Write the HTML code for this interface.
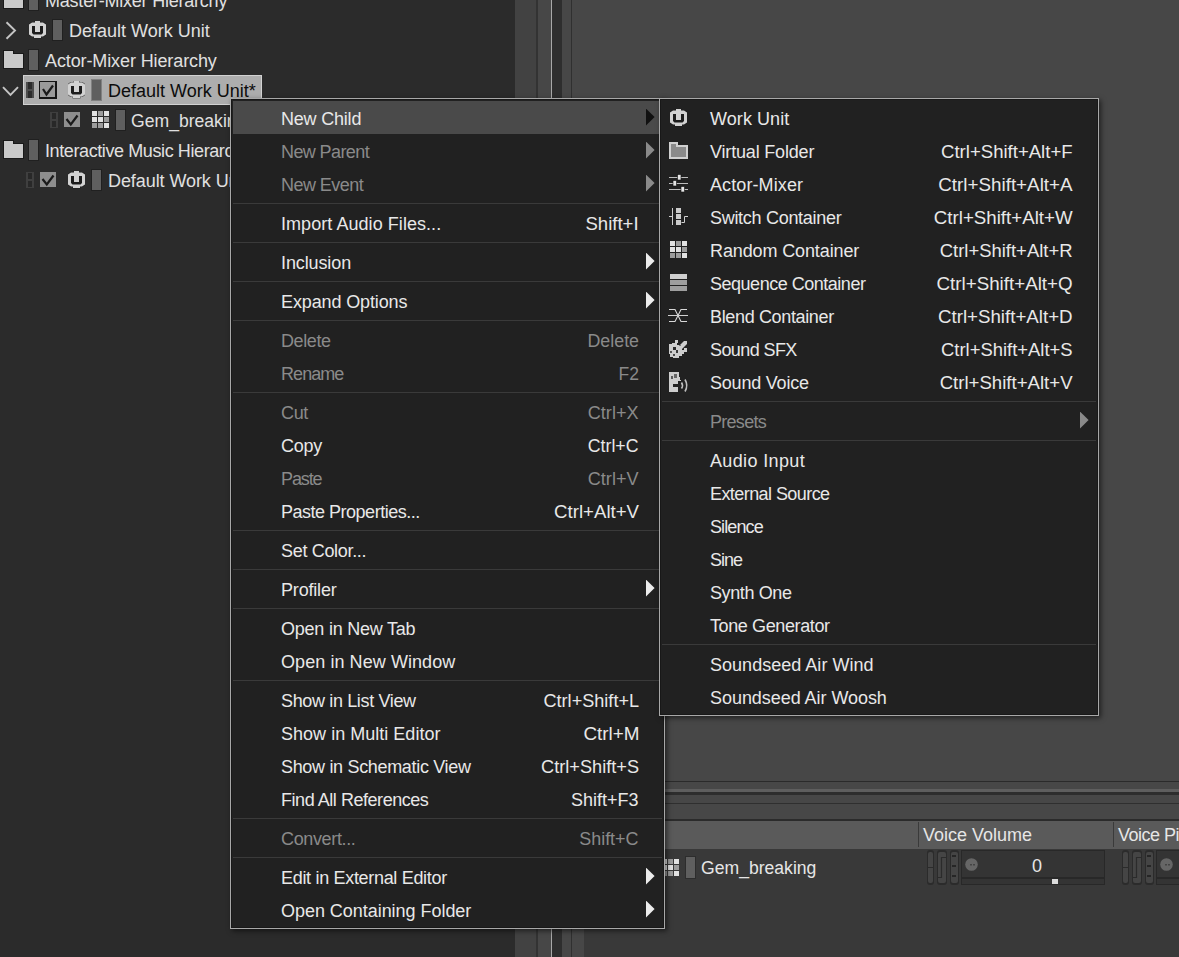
<!DOCTYPE html>
<html><head><meta charset="utf-8">
<style>
*{margin:0;padding:0;box-sizing:border-box}
html,body{width:1179px;height:957px;overflow:hidden;background:#2b2b2b;font-family:"Liberation Sans",sans-serif;}
.a{position:absolute}
.t{position:absolute;white-space:nowrap;font-size:18px;line-height:20px;color:#dcdcdc}
/* menus */
.menu{position:absolute;background:#212121;border:1px solid #a8a8a8;box-shadow:2px 2px 5px rgba(0,0,0,.55)}
.menu .in{position:absolute;left:0;top:0;right:0;bottom:0;border:1px solid #181818}
.it{position:absolute;left:2px;height:33px;width:429px}
.it .l{position:absolute;left:48px;top:2px;line-height:33px;font-size:18px;color:#e8e8e8;white-space:nowrap}
.it .r{position:absolute;right:23px;top:2px;line-height:33px;font-size:18px;color:#e8e8e8;white-space:nowrap}
.it.d .l,.it.d .r{color:#8a8a8a}
.it.hl{background:#4a4a4a}
.sep{position:absolute;left:2px;height:1px;background:#3a3a3a}
.arr{position:absolute;width:0;height:0;border-top:8px solid transparent;border-bottom:8px solid transparent;border-left:8px solid #ececec}
.it.d .arr{border-left-color:#7a7a7a}
</style></head><body>
<!-- background panels -->
<div class="a" style="left:515px;top:0;width:21px;height:957px;background:#424242"></div>
<div class="a" style="left:536px;top:0;width:2px;height:957px;background:#333"></div>
<div class="a" style="left:538px;top:0;width:13px;height:957px;background:#474747"></div>
<div class="a" style="left:551px;top:0;width:1px;height:957px;background:#a8a8a8"></div>
<div class="a" style="left:552px;top:0;width:10px;height:957px;background:#2e2e2e"></div>
<div class="a" style="left:562px;top:0;width:9px;height:957px;background:#474747"></div>
<div class="a" style="left:571px;top:0;width:1px;height:957px;background:#303030"></div>
<div class="a" style="left:572px;top:0;width:607px;height:957px;background:#474747"></div>

<div class="a" style="left:572px;top:781px;width:607px;height:1px;background:#2a2a2a"></div>
<div class="a" style="left:572px;top:789px;width:607px;height:3px;background:#5e5e5e"></div>
<div class="a" style="left:572px;top:792px;width:607px;height:3px;background:#2d2d2d"></div>
<div class="a" style="left:572px;top:803px;width:607px;height:1px;background:#2f2f2f"></div>
<div class="a" style="left:572px;top:819px;width:607px;height:2px;background:#2b2b2b"></div>
<!-- LIST -->
<div class="a" style="left:584px;top:821px;width:595px;height:28px;background:#5a5a5a"></div>
<div class="a" style="left:584px;top:849px;width:595px;height:108px;background:#393939"></div>
<div class="a" style="left:918px;top:822px;width:1px;height:25px;background:#3a3a3a"></div>
<div class="a" style="left:1113px;top:822px;width:1px;height:25px;background:#3a3a3a"></div>
<div class="t" style="left:923px;top:825px;color:#e6e6e6">Voice Volume</div>
<div class="t" style="left:1118px;top:825px;color:#e6e6e6;letter-spacing:-0.5px">Voice Pitch</div>
<svg class="a" style="left:662px;top:859px" width="17" height="17" viewBox="0 0 17 17" ><rect x="0" y="0" width="5" height="5" fill="#e2e2e2"/><rect x="6" y="0" width="5" height="5" fill="#9c9c9c"/><rect x="12" y="0" width="5" height="5" fill="#e2e2e2"/><rect x="0" y="6" width="5" height="5" fill="#e2e2e2"/><rect x="6" y="6" width="5" height="5" fill="#e2e2e2"/><rect x="12" y="6" width="5" height="5" fill="#9c9c9c"/><rect x="0" y="12" width="5" height="5" fill="#9c9c9c"/><rect x="6" y="12" width="5" height="5" fill="#9c9c9c"/><rect x="12" y="12" width="5" height="5" fill="#e2e2e2"/></svg>
<div class="a" style="left:686px;top:857px;width:9px;height:21px;background:#5f5f5f;box-shadow:0 0 0 1px rgba(0,0,0,.2)"></div>
<div class="t" style="left:701px;top:858px;font-size:17.6px;color:#e6e6e6">Gem_breaking</div>
<div class="a" style="left:927px;top:850px;width:7px;height:35px;background:#2b2b2b;border-radius:3px"></div>
<div class="a" style="left:928px;top:852px;width:5px;height:31px;background:#454545;border-radius:2px"></div>
<div class="a" style="left:928px;top:867px;width:5px;height:1px;background:#2b2b2b"></div>
<div class="a" style="left:937px;top:850px;width:10px;height:35px;background:#2b2b2b;border-radius:3px"></div>
<div class="a" style="left:938px;top:852px;width:8px;height:31px;background:#454545;border-radius:2px"></div>
<svg class="a" style="left:938px;top:852px" width="8" height="31" viewBox="0 0 8 31" ><path d="M0,25.5H3.5V5.5H8" fill="none" stroke="#2b2b2b" stroke-width="1.2"/></svg>
<div class="a" style="left:950px;top:850px;width:9px;height:35px;background:#2b2b2b;border-radius:3px"></div>
<div class="a" style="left:951px;top:852px;width:7px;height:31px;background:#454545;border-radius:2px"></div>
<div class="a" style="left:952px;top:855px;width:4px;height:2px;background:#262626"></div>
<div class="a" style="left:952px;top:865px;width:4px;height:2px;background:#262626"></div>
<div class="a" style="left:952px;top:875px;width:4px;height:2px;background:#262626"></div>
<div class="a" style="left:961px;top:850px;width:144px;height:35px;background:#282828"></div>
<div class="a" style="left:962px;top:851px;width:142px;height:26px;background:#343434"></div>
<div class="a" style="left:962px;top:879px;width:142px;height:5px;background:#343434"></div>
<svg class="a" style="left:965px;top:858px" width="13" height="13" viewBox="0 0 13 13" ><circle cx="6.5" cy="6.5" r="6.3" fill="#666"/><rect x="5" y="6" width="2" height="1.5" fill="#444"/><rect x="8" y="6" width="2" height="1.5" fill="#444"/></svg>
<div class="t" style="left:1032px;top:856px;color:#e6e6e6">0</div>
<div class="a" style="left:1052px;top:879px;width:6px;height:5px;background:#dcdcdc"></div>
<div class="a" style="left:1122px;top:850px;width:7px;height:35px;background:#2b2b2b;border-radius:3px"></div>
<div class="a" style="left:1123px;top:852px;width:5px;height:31px;background:#454545;border-radius:2px"></div>
<div class="a" style="left:1123px;top:867px;width:5px;height:1px;background:#2b2b2b"></div>
<div class="a" style="left:1132px;top:850px;width:10px;height:35px;background:#2b2b2b;border-radius:3px"></div>
<div class="a" style="left:1133px;top:852px;width:8px;height:31px;background:#454545;border-radius:2px"></div>
<svg class="a" style="left:1133px;top:852px" width="8" height="31" viewBox="0 0 8 31" ><path d="M0,25.5H3.5V5.5H8" fill="none" stroke="#2b2b2b" stroke-width="1.2"/></svg>
<div class="a" style="left:1145px;top:850px;width:9px;height:35px;background:#2b2b2b;border-radius:3px"></div>
<div class="a" style="left:1146px;top:852px;width:7px;height:31px;background:#454545;border-radius:2px"></div>
<div class="a" style="left:1147px;top:855px;width:4px;height:2px;background:#262626"></div>
<div class="a" style="left:1147px;top:865px;width:4px;height:2px;background:#262626"></div>
<div class="a" style="left:1147px;top:875px;width:4px;height:2px;background:#262626"></div>
<div class="a" style="left:1156px;top:850px;width:144px;height:35px;background:#282828"></div>
<div class="a" style="left:1157px;top:851px;width:142px;height:26px;background:#343434"></div>
<div class="a" style="left:1157px;top:879px;width:142px;height:5px;background:#343434"></div>
<svg class="a" style="left:1160px;top:858px" width="13" height="13" viewBox="0 0 13 13" ><circle cx="6.5" cy="6.5" r="6.3" fill="#666"/><rect x="5" y="6" width="2" height="1.5" fill="#444"/><rect x="8" y="6" width="2" height="1.5" fill="#444"/></svg>
<div class="t" style="left:1227px;top:856px;color:#e6e6e6">0</div>
<div class="a" style="left:1247px;top:879px;width:6px;height:5px;background:#dcdcdc"></div>
<!-- /LIST -->
<!-- TREE -->
<svg class="a" style="left:4px;top:-9px" width="19" height="17" viewBox="0 0 19 17" overflow="visible"><path fill="#121212" d="M-1,-1H10V2H20V18H-1Z" opacity=".7"/><path fill="#c9c9c9" d="M0,0H9V3H19V17H0Z"/></svg>
<div class="a" style="left:29px;top:-10px;width:9px;height:20px;background:#5f5f5f;box-shadow:0 0 0 1px rgba(0,0,0,.25)"></div>
<div class="t" style="left:45px;top:-9px;color:#e0e0e0;letter-spacing:-0.22px">Master-Mixer Hierarchy</div>
<svg class="a" style="left:5px;top:21px" width="12" height="19" viewBox="0 0 12 19" ><path d="M1.5,1.2L10,9.5L1.5,17.8" fill="none" stroke="#c4c4c4" stroke-width="1.9"/></svg>
<svg class="a" style="left:29px;top:21px" width="17" height="18" viewBox="0 0 17 18" ><path fill="#151515" opacity=".6" d="M5.5,-.5H11.5V1H14.5L17.5,3V14L14.5,16H12.5V17.5H4.5V16H2.5L-.5,14V3L2.5,1H5.5Z"/><path fill="#d2d2d2" d="M6,0H11V1.5H14L17,3.5V13.5L14,15.5H12V17H5V15.5H3L0,13.5V3.5L3,1.5H6Z"/><path fill="#1c1c1c" d="M3,5H6V11H11V5H14V12L12.5,13.5H4.5L3,12Z"/></svg>
<div class="a" style="left:53px;top:20px;width:9px;height:20px;background:#5f5f5f;box-shadow:0 0 0 1px rgba(0,0,0,.25)"></div>
<div class="t" style="left:69px;top:21px;color:#e0e0e0;">Default Work Unit</div>
<svg class="a" style="left:4px;top:51px" width="19" height="17" viewBox="0 0 19 17" overflow="visible"><path fill="#121212" d="M-1,-1H10V2H20V18H-1Z" opacity=".7"/><path fill="#c9c9c9" d="M0,0H9V3H19V17H0Z"/></svg>
<div class="a" style="left:29px;top:50px;width:9px;height:20px;background:#5f5f5f;box-shadow:0 0 0 1px rgba(0,0,0,.25)"></div>
<div class="t" style="left:45px;top:51px;color:#e0e0e0;letter-spacing:-0.11px">Actor-Mixer Hierarchy</div>
<div class="a" style="left:23px;top:75px;width:239px;height:30px;background:#adadad;border:1px solid #d2d2d2"></div>
<svg class="a" style="left:2px;top:86px" width="17" height="11" viewBox="0 0 17 11" ><path d="M1,1.2L8.5,9L16,1.2" fill="none" stroke="#c4c4c4" stroke-width="1.9"/></svg>
<svg class="a" style="left:26px;top:82px" width="8" height="16" viewBox="0 0 8 16" ><rect width="8" height="16" fill="#4d4d4d"/><rect x="2" y="0" width="4" height="7" fill="#2c2c2c"/><rect x="2" y="9" width="4" height="7" fill="#2c2c2c"/></svg>
<svg class="a" style="left:39px;top:81px" width="18" height="18" viewBox="0 0 18 18" ><rect width="18" height="18" fill="#151515"/><rect x="1" y="1" width="15" height="15" fill="#9a9a9a"/><path d="M4,8 L7.5,13.5 L14,4.5" fill="none" stroke="#1a1a1a" stroke-width="2.2"/></svg>
<svg class="a" style="left:68px;top:81px" width="17" height="18" viewBox="0 0 17 18" ><path fill="#151515" opacity=".6" d="M5.5,-.5H11.5V1H14.5L17.5,3V14L14.5,16H12.5V17.5H4.5V16H2.5L-.5,14V3L2.5,1H5.5Z"/><path fill="#d2d2d2" d="M6,0H11V1.5H14L17,3.5V13.5L14,15.5H12V17H5V15.5H3L0,13.5V3.5L3,1.5H6Z"/><path fill="#1c1c1c" d="M3,5H6V11H11V5H14V12L12.5,13.5H4.5L3,12Z"/></svg>
<div class="a" style="left:92px;top:80px;width:9px;height:20px;background:#5f5f5f;box-shadow:0 0 0 1px rgba(0,0,0,.25)"></div>
<div class="t" style="left:108px;top:81px;color:#0c0c0c;">Default Work Unit*</div>
<svg class="a" style="left:50px;top:112px" width="8" height="16" viewBox="0 0 8 16" ><rect width="8" height="16" fill="#3f3f3f"/><rect x="2" y="1" width="4" height="6" fill="#282828"/><rect x="2" y="9" width="4" height="6" fill="#282828"/></svg>
<svg class="a" style="left:64px;top:112px" width="16" height="15" viewBox="0 0 16 15" ><rect width="16" height="15" fill="#8e8e8e"/><path d="M2.5,7 L6.8,12.5 L13.5,3.5" fill="none" stroke="#1a1a1a" stroke-width="2.2"/></svg>
<svg class="a" style="left:92px;top:111px" width="17" height="17" viewBox="0 0 17 17" ><rect x="0" y="0" width="5" height="5" fill="#e2e2e2"/><rect x="6" y="0" width="5" height="5" fill="#9c9c9c"/><rect x="12" y="0" width="5" height="5" fill="#e2e2e2"/><rect x="0" y="6" width="5" height="5" fill="#e2e2e2"/><rect x="6" y="6" width="5" height="5" fill="#e2e2e2"/><rect x="12" y="6" width="5" height="5" fill="#9c9c9c"/><rect x="0" y="12" width="5" height="5" fill="#9c9c9c"/><rect x="6" y="12" width="5" height="5" fill="#9c9c9c"/><rect x="12" y="12" width="5" height="5" fill="#e2e2e2"/></svg>
<div class="a" style="left:116px;top:110px;width:9px;height:20px;background:#5f5f5f;box-shadow:0 0 0 1px rgba(0,0,0,.25)"></div>
<div class="t" style="left:131px;top:111px;color:#e0e0e0;font-size:17.6px">Gem_breaking</div>
<svg class="a" style="left:4px;top:141px" width="19" height="17" viewBox="0 0 19 17" overflow="visible"><path fill="#121212" d="M-1,-1H10V2H20V18H-1Z" opacity=".7"/><path fill="#c9c9c9" d="M0,0H9V3H19V17H0Z"/></svg>
<div class="a" style="left:29px;top:140px;width:9px;height:20px;background:#5f5f5f;box-shadow:0 0 0 1px rgba(0,0,0,.25)"></div>
<div class="t" style="left:45px;top:141px;color:#e0e0e0;letter-spacing:-0.4px">Interactive Music Hierarchy</div>
<svg class="a" style="left:26px;top:172px" width="8" height="16" viewBox="0 0 8 16" ><rect width="8" height="16" fill="#3f3f3f"/><rect x="2" y="1" width="4" height="6" fill="#282828"/><rect x="2" y="9" width="4" height="6" fill="#282828"/></svg>
<svg class="a" style="left:40px;top:172px" width="16" height="15" viewBox="0 0 16 15" ><rect width="16" height="15" fill="#8e8e8e"/><path d="M2.5,7 L6.8,12.5 L13.5,3.5" fill="none" stroke="#1a1a1a" stroke-width="2.2"/></svg>
<svg class="a" style="left:68px;top:171px" width="17" height="18" viewBox="0 0 17 18" ><path fill="#151515" opacity=".6" d="M5.5,-.5H11.5V1H14.5L17.5,3V14L14.5,16H12.5V17.5H4.5V16H2.5L-.5,14V3L2.5,1H5.5Z"/><path fill="#d2d2d2" d="M6,0H11V1.5H14L17,3.5V13.5L14,15.5H12V17H5V15.5H3L0,13.5V3.5L3,1.5H6Z"/><path fill="#1c1c1c" d="M3,5H6V11H11V5H14V12L12.5,13.5H4.5L3,12Z"/></svg>
<div class="a" style="left:92px;top:170px;width:9px;height:20px;background:#5f5f5f;box-shadow:0 0 0 1px rgba(0,0,0,.25)"></div>
<div class="t" style="left:108px;top:171px;color:#e0e0e0;letter-spacing:-0.08px">Default Work Unit</div>
<!-- /TREE -->
<!-- MENUS -->
<div class="menu m1" style="left:230px;top:98px;width:435px;height:831px"><div class="in"></div>
<div class="it hl" style="top:2px;width:429px"><span class="l" style="letter-spacing:-0.200px">New Child</span><svg class="a" style="left:413px;top:8px" width="9" height="17"><path d="M0,-0.4L8.6,8.1L0,16.6Z" fill="#111"/></svg></div>
<div class="it d" style="top:35px;width:429px"><span class="l" style="letter-spacing:-0.600px">New Parent</span><svg class="a" style="left:413px;top:8px" width="9" height="17"><path d="M0,-0.4L8.6,8.1L0,16.6Z" fill="#8a8a8a"/></svg></div>
<div class="it d" style="top:68px;width:429px"><span class="l" style="letter-spacing:-0.538px">New Event</span><svg class="a" style="left:413px;top:8px" width="9" height="17"><path d="M0,-0.4L8.6,8.1L0,16.6Z" fill="#8a8a8a"/></svg></div>
<div class="sep" style="top:104px;width:429px"></div>
<div class="it" style="top:107px;width:429px"><span class="l" style="letter-spacing:0.055px">Import Audio Files...</span><span class="r" style="transform:scaleX(1.0302);transform-origin:100% 50%">Shift+I</span></div>
<div class="sep" style="top:143px;width:429px"></div>
<div class="it" style="top:146px;width:429px"><span class="l" style="letter-spacing:-0.113px">Inclusion</span><svg class="a" style="left:413px;top:8px" width="9" height="17"><path d="M0,-0.4L8.6,8.1L0,16.6Z" fill="#ececec"/></svg></div>
<div class="sep" style="top:182px;width:429px"></div>
<div class="it" style="top:185px;width:429px"><span class="l" style="letter-spacing:-0.123px">Expand Options</span><svg class="a" style="left:413px;top:8px" width="9" height="17"><path d="M0,-0.4L8.6,8.1L0,16.6Z" fill="#ececec"/></svg></div>
<div class="sep" style="top:221px;width:429px"></div>
<div class="it d" style="top:224px;width:429px"><span class="l" style="letter-spacing:-0.400px">Delete</span><span class="r" style="transform:scaleX(0.9904);transform-origin:100% 50%">Delete</span></div>
<div class="it d" style="top:257px;width:429px"><span class="l" style="letter-spacing:-0.940px">Rename</span><span class="r" style="transform:scaleX(0.9737);transform-origin:100% 50%">F2</span></div>
<div class="sep" style="top:293px;width:429px"></div>
<div class="it d" style="top:296px;width:429px"><span class="l" style="letter-spacing:-0.350px">Cut</span><span class="r" style="transform:scaleX(1.0041);transform-origin:100% 50%">Ctrl+X</span></div>
<div class="it" style="top:329px;width:429px"><span class="l" style="letter-spacing:-0.233px">Copy</span><span class="r" style="transform:scaleX(0.9842);transform-origin:100% 50%">Ctrl+C</span></div>
<div class="it d" style="top:362px;width:429px"><span class="l" style="letter-spacing:-1.100px">Paste</span><span class="r" style="transform:scaleX(1.0042);transform-origin:100% 50%">Ctrl+V</span></div>
<div class="it" style="top:395px;width:429px"><span class="l" style="letter-spacing:-0.494px">Paste Properties...</span><span class="r" style="transform:scaleX(1.0356);transform-origin:100% 50%">Ctrl+Alt+V</span></div>
<div class="sep" style="top:431px;width:429px"></div>
<div class="it" style="top:434px;width:429px"><span class="l" style="letter-spacing:-0.318px">Set Color...</span></div>
<div class="sep" style="top:470px;width:429px"></div>
<div class="it" style="top:473px;width:429px"><span class="l" style="letter-spacing:-0.186px">Profiler</span><svg class="a" style="left:413px;top:8px" width="9" height="17"><path d="M0,-0.4L8.6,8.1L0,16.6Z" fill="#ececec"/></svg></div>
<div class="sep" style="top:509px;width:429px"></div>
<div class="it" style="top:512px;width:429px"><span class="l" style="letter-spacing:-0.229px">Open in New Tab</span></div>
<div class="it" style="top:545px;width:429px"><span class="l" style="letter-spacing:0.071px">Open in New Window</span></div>
<div class="sep" style="top:581px;width:429px"></div>
<div class="it" style="top:584px;width:429px"><span class="l" style="letter-spacing:-0.356px">Show in List View</span><span class="r" style="transform:scaleX(1.0053);transform-origin:100% 50%">Ctrl+Shift+L</span></div>
<div class="it" style="top:617px;width:429px"><span class="l" style="letter-spacing:0.021px">Show in Multi Editor</span><span class="r" style="transform:scaleX(1.0486);transform-origin:100% 50%">Ctrl+M</span></div>
<div class="it" style="top:650px;width:429px"><span class="l" style="letter-spacing:-0.324px">Show in Schematic View</span><span class="r" style="transform:scaleX(1.0094);transform-origin:100% 50%">Ctrl+Shift+S</span></div>
<div class="it" style="top:683px;width:429px"><span class="l" style="letter-spacing:-0.456px">Find All References</span><span class="r" style="transform:scaleX(0.9985);transform-origin:100% 50%">Shift+F3</span></div>
<div class="sep" style="top:719px;width:429px"></div>
<div class="it d" style="top:722px;width:429px"><span class="l" style="letter-spacing:-0.356px">Convert...</span><span class="r" style="transform:scaleX(0.9967);transform-origin:100% 50%">Shift+C</span></div>
<div class="sep" style="top:758px;width:429px"></div>
<div class="it" style="top:761px;width:429px"><span class="l" style="letter-spacing:-0.314px">Edit in External Editor</span><svg class="a" style="left:413px;top:8px" width="9" height="17"><path d="M0,-0.4L8.6,8.1L0,16.6Z" fill="#ececec"/></svg></div>
<div class="it" style="top:794px;width:429px"><span class="l" style="letter-spacing:-0.038px">Open Containing Folder</span><svg class="a" style="left:413px;top:8px" width="9" height="17"><path d="M0,-0.4L8.6,8.1L0,16.6Z" fill="#ececec"/></svg></div>
</div>
<div class="menu m2" style="left:659px;top:98px;width:440px;height:618px"><div class="in"></div>
<div class="it" style="top:2px;width:434px"><svg class="a" style="left:8px;top:8px" width="17" height="18" viewBox="0 0 17 18" ><path fill="#151515" opacity=".6" d="M5.5,-.5H11.5V1H14.5L17.5,3V14L14.5,16H12.5V17.5H4.5V16H2.5L-.5,14V3L2.5,1H5.5Z"/><path fill="#d2d2d2" d="M6,0H11V1.5H14L17,3.5V13.5L14,15.5H12V17H5V15.5H3L0,13.5V3.5L3,1.5H6Z"/><path fill="#1c1c1c" d="M3,5H6V11H11V5H14V12L12.5,13.5H4.5L3,12Z"/></svg><span class="l" style="letter-spacing:0.075px">Work Unit</span></div>
<div class="it" style="top:35px;width:434px"><svg class="a" style="left:7px;top:8px" width="19" height="17" viewBox="0 0 19 17" ><path fill="#d0d0d0" d="M0,0H9V3H19V17H0Z"/><path fill="#8a8a8a" d="M2,2H7V5H17V15H2Z"/></svg><span class="l" style="letter-spacing:-0.177px">Virtual Folder</span><span class="r" style="transform:scaleX(1.0309);transform-origin:100% 50%">Ctrl+Shift+Alt+F</span></div>
<div class="it" style="top:68px;width:434px"><svg class="a" style="left:7px;top:7px" width="19" height="19" viewBox="0 0 19 19" ><rect x="0" y="3" width="19" height="1" fill="#bdbdbd"/><rect x="0" y="9" width="19" height="1" fill="#bdbdbd"/><rect x="0" y="15" width="19" height="1" fill="#bdbdbd"/><rect x="8.5" y="0.5" width="3.5" height="5.5" fill="#e6e6e6" stroke="#111" stroke-width=".6"/><rect x="4" y="6.5" width="3.5" height="5.5" fill="#e6e6e6" stroke="#111" stroke-width=".6"/><rect x="12" y="12.5" width="3.5" height="5.5" fill="#e6e6e6" stroke="#111" stroke-width=".6"/></svg><span class="l" style="letter-spacing:0.100px">Actor-Mixer</span><span class="r" style="transform:scaleX(1.0448);transform-origin:100% 50%">Ctrl+Shift+Alt+A</span></div>
<div class="it" style="top:101px;width:434px"><svg class="a" style="left:7px;top:8px" width="19" height="17" viewBox="0 0 19 17" ><rect x="3" y="0" width="1" height="17" fill="#d0d0d0"/><rect x="0" y="8" width="3" height="1" fill="#d0d0d0"/><rect x="7" y="0" width="5" height="5" fill="#cbcbcb"/><rect x="7" y="6" width="5" height="5" fill="#cbcbcb"/><rect x="7" y="12" width="5" height="5" fill="#cbcbcb"/><path d="M12.5,14.5H15.5V8.5H19" fill="none" stroke="#d0d0d0" stroke-width="1"/></svg><span class="l" style="letter-spacing:-0.293px">Switch Container</span><span class="r" style="transform:scaleX(1.0385);transform-origin:100% 50%">Ctrl+Shift+Alt+W</span></div>
<div class="it" style="top:134px;width:434px"><svg class="a" style="left:8px;top:8px" width="17" height="17" viewBox="0 0 17 17" ><rect x="0" y="0" width="5" height="5" fill="#e2e2e2"/><rect x="6" y="0" width="5" height="5" fill="#9c9c9c"/><rect x="12" y="0" width="5" height="5" fill="#e2e2e2"/><rect x="0" y="6" width="5" height="5" fill="#e2e2e2"/><rect x="6" y="6" width="5" height="5" fill="#e2e2e2"/><rect x="12" y="6" width="5" height="5" fill="#9c9c9c"/><rect x="0" y="12" width="5" height="5" fill="#9c9c9c"/><rect x="6" y="12" width="5" height="5" fill="#9c9c9c"/><rect x="12" y="12" width="5" height="5" fill="#e2e2e2"/></svg><span class="l" style="letter-spacing:-0.120px">Random Container</span><span class="r" style="transform:scaleX(1.0257);transform-origin:100% 50%">Ctrl+Shift+Alt+R</span></div>
<div class="it" style="top:167px;width:434px"><svg class="a" style="left:8px;top:8px" width="17" height="17" viewBox="0 0 17 17" ><rect x="0" y="0" width="17" height="5" fill="#cfcfcf"/><rect x="0" y="6" width="17" height="5" fill="#9e9e9e"/><rect x="0" y="12" width="17" height="5" fill="#9e9e9e"/></svg><span class="l" style="letter-spacing:-0.482px">Sequence Container</span><span class="r" style="transform:scaleX(1.0417);transform-origin:100% 50%">Ctrl+Shift+Alt+Q</span></div>
<div class="it" style="top:200px;width:434px"><svg class="a" style="left:6px;top:8px" width="20" height="17" viewBox="0 0 20 17" ><path d="M1,2.5H7L10,8.5L13,14.5H19" fill="none" stroke="#d8d8d8" stroke-width="1.1"/><path d="M1,14.5H7L10,8.5L13,2.5H19" fill="none" stroke="#d8d8d8" stroke-width="1.1"/><path d="M0,8.5H20" fill="none" stroke="#d0d0d0" stroke-width="1"/></svg><span class="l" style="letter-spacing:-0.350px">Blend Container</span><span class="r" style="transform:scaleX(1.0389);transform-origin:100% 50%">Ctrl+Shift+Alt+D</span></div>
<div class="it" style="top:233px;width:434px"><svg class="a" style="left:7px;top:8px" width="18" height="18" viewBox="0 0 18 18" ><path fill="#cdcdcd" d="M0,4H3V3H6V0H9V3H8V5H10V7H13V10H15V8H18V12H15V14H13V16H10V18H4V17H1V14H0Z"/><path fill="#cdcdcd" d="M9,7L15,1H18V4L12,10H10Z"/><rect x="4" y="7" width="3" height="3" fill="#2a2a2a"/><rect x="7" y="10" width="2" height="3" fill="#3a3a3a"/><rect x="1" y="11" width="2" height="2" fill="#555"/><rect x="4" y="14" width="2" height="2" fill="#4a4a4a"/><rect x="10" y="5" width="2" height="1" fill="#777"/></svg><span class="l" style="letter-spacing:-0.587px">Sound SFX</span><span class="r" style="transform:scaleX(1.0235);transform-origin:100% 50%">Ctrl+Shift+Alt+S</span></div>
<div class="it" style="top:266px;width:434px"><svg class="a" style="left:7px;top:7px" width="21" height="21" viewBox="0 0 21 21" ><path fill="#cdcdcd" d="M0,0H10V5H11V8H12V9H9V12H4V15H9V20H0Z"/><rect x="2" y="4" width="2" height="3" fill="#5a5a5a"/><rect x="5" y="2" width="3" height="4" fill="#666"/><path d="M12.5,10.5Q14.5,13.5 12.5,16.5" fill="none" stroke="#c0c0c0" stroke-width="1.6"/><path d="M16,7.5Q19.5,13.5 16,19.5" fill="none" stroke="#bdbdbd" stroke-width="1.6"/></svg><span class="l" style="letter-spacing:-0.210px">Sound Voice</span><span class="r" style="transform:scaleX(1.0338);transform-origin:100% 50%">Ctrl+Shift+Alt+V</span></div>
<div class="sep" style="top:302px;width:434px"></div>
<div class="it d" style="top:305px;width:434px"><span class="l" style="letter-spacing:-0.717px">Presets</span><svg class="a" style="left:418px;top:8px" width="9" height="17"><path d="M0,-0.4L8.6,8.1L0,16.6Z" fill="#8a8a8a"/></svg></div>
<div class="sep" style="top:341px;width:434px"></div>
<div class="it" style="top:344px;width:434px"><span class="l" style="letter-spacing:0.360px">Audio Input</span></div>
<div class="it" style="top:377px;width:434px"><span class="l" style="letter-spacing:-0.571px">External Source</span></div>
<div class="it" style="top:410px;width:434px"><span class="l" style="letter-spacing:-0.883px">Silence</span></div>
<div class="it" style="top:443px;width:434px"><span class="l" style="letter-spacing:-1.000px">Sine</span></div>
<div class="it" style="top:476px;width:434px"><span class="l" style="letter-spacing:-0.388px">Synth One</span></div>
<div class="it" style="top:509px;width:434px"><span class="l" style="letter-spacing:-0.385px">Tone Generator</span></div>
<div class="sep" style="top:545px;width:434px"></div>
<div class="it" style="top:548px;width:434px"><span class="l" style="letter-spacing:0.024px">Soundseed Air Wind</span></div>
<div class="it" style="top:581px;width:434px"><span class="l" style="letter-spacing:-0.050px">Soundseed Air Woosh</span></div>
</div>
<!-- /MENUS -->
</body></html>
